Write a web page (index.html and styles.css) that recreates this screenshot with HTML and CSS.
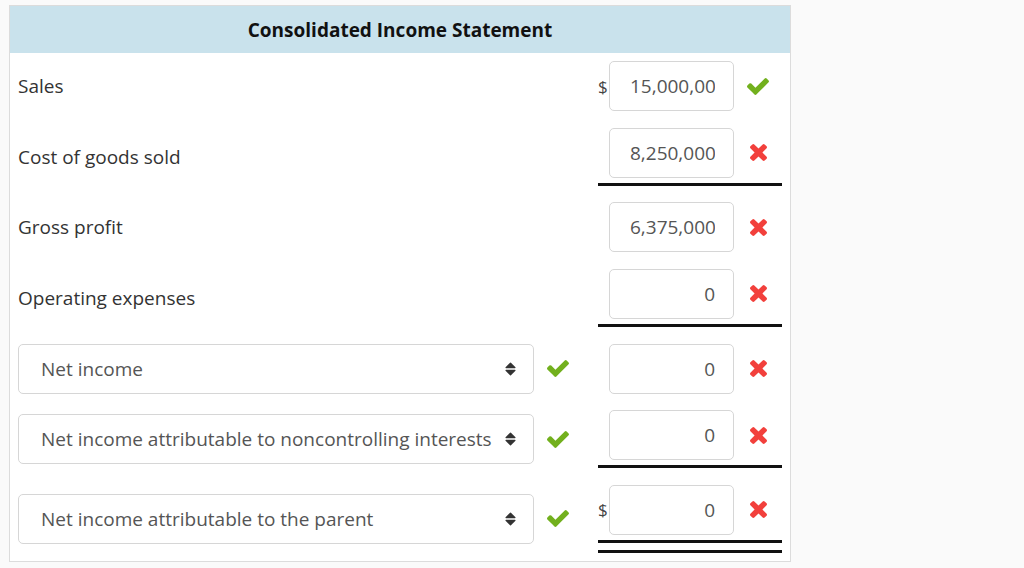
FILE: index.html
```html
<!DOCTYPE html>
<html lang="en">
<head>
<meta charset="utf-8">
<title>Consolidated Income Statement</title>
<link rel="stylesheet" href="styles.css">
</head>
<body>
<svg width="0" height="0" class="defs" aria-hidden="true">
  <defs>
    <symbol id="ok" viewBox="121 334 1550 1190"><path d="M1671 566q0 40-28 68l-724 724-136 136q-28 28-68 28t-68-28l-136-136-362-362q-28-28-28-68t28-68l136-136q28-28 68-28t68 28l294 295 656-657q28-28 68-28t68 28l136 136q28 28 28 68z"/></symbol>
    <symbol id="bad" viewBox="110 366 1188 1188"><path d="M1298 1322q0 40-28 68l-136 136q-28 28-68 28t-68-28l-294-294-294 294q-28 28-68 28t-68-28l-136-136q-28-28-28-68t28-68l294-294-294-294q-28-28-28-68t28-68l136-136q28-28 68-28t68 28l294 294 294-294q28-28 68-28t68 28l136 136q28 28 28 68t-28 68l-294 294 294 294q28 28 28 68z"/></symbol>
    <symbol id="sort" viewBox="0 0 11 14"><path d="M1 6.2h9a.6.6 0 0 0 .45-1L5.950.7a.6.6 0 0 0-.9 0L.55 5.2A.6.6 0 0 0 1 6.2zM1 7.8h9a.6.6 0 0 1 .45 1l-4.5 4.5a.6.6 0 0 1-.9 0L.55 8.8A.6.6 0 0 1 1 7.8z"/></symbol>
  </defs>
</svg>
<div class="statement">
  <div class="head">Consolidated Income Statement</div>
  <div class="rows">
    <div class="row">
      <div class="label">Sales</div>
      <div class="mark"></div>
      <div class="amt">
        <div class="line"><span class="cur">$</span><div class="box"><span class="val">15,000,000</span></div><span class="status"><svg class="ok"><use href="#ok"/></svg></span></div>
      </div>
    </div>
    <div class="row">
      <div class="label">Cost of goods sold</div>
      <div class="mark"></div>
      <div class="amt">
        <div class="line"><span class="cur"></span><div class="box"><span class="val">8,250,000</span></div><span class="status"><svg class="bad"><use href="#bad"/></svg></span></div>
        <div class="rule"></div>
      </div>
    </div>
    <div class="row">
      <div class="label">Gross profit</div>
      <div class="mark"></div>
      <div class="amt">
        <div class="line"><span class="cur"></span><div class="box"><span class="val">6,375,000</span></div><span class="status"><svg class="bad"><use href="#bad"/></svg></span></div>
      </div>
    </div>
    <div class="row">
      <div class="label">Operating expenses</div>
      <div class="mark"></div>
      <div class="amt">
        <div class="line"><span class="cur"></span><div class="box"><span class="val">0</span></div><span class="status"><svg class="bad"><use href="#bad"/></svg></span></div>
        <div class="rule"></div>
      </div>
    </div>
    <div class="row">
      <div class="select"><span>Net income</span><svg class="sort"><use href="#sort"/></svg></div>
      <div class="mark"><svg class="ok"><use href="#ok"/></svg></div>
      <div class="amt">
        <div class="line"><span class="cur"></span><div class="box"><span class="val">0</span></div><span class="status"><svg class="bad"><use href="#bad"/></svg></span></div>
      </div>
    </div>
    <div class="row">
      <div class="select"><span>Net income attributable to noncontrolling interests</span><svg class="sort"><use href="#sort"/></svg></div>
      <div class="mark"><svg class="ok"><use href="#ok"/></svg></div>
      <div class="amt">
        <div class="line"><span class="cur"></span><div class="box"><span class="val">0</span></div><span class="status"><svg class="bad"><use href="#bad"/></svg></span></div>
        <div class="rule"></div>
      </div>
    </div>
    <div class="row">
      <div class="select"><span>Net income attributable to the parent</span><svg class="sort"><use href="#sort"/></svg></div>
      <div class="mark"><svg class="ok"><use href="#ok"/></svg></div>
      <div class="amt">
        <div class="line"><span class="cur">$</span><div class="box"><span class="val">0</span></div><span class="status"><svg class="bad"><use href="#bad"/></svg></span></div>
        <div class="rule double"></div>
      </div>
    </div>
  </div>
</div>
</body>
</html>
```
FILE: styles.css
```css
html, body {
  margin: 0;
  padding: 0;
}
body {
  background: #fafafa;
  padding: 5px 0 0 9px;
  font-family: "Open Sans", "Liberation Sans", sans-serif;
  font-size: 19px;
  color: #333;
  height: 568px;
  box-sizing: border-box;
  overflow: hidden;
}
.defs {
  position: absolute;
  width: 0;
  height: 0;
}
.statement {
  width: 782px;
  box-sizing: border-box;
  border: 1px solid #dcdcdc;
  background: #fff;
}
.head {
  height: 47px;
  background: #c9e2ec;
  display: flex;
  align-items: center;
  justify-content: center;
  font-weight: 700;
  color: #111;
}
.rows {
  padding: 8px 8px 8px 8px;
  display: flex;
  flex-direction: column;
  gap: 16.67px;
}
.row {
  display: grid;
  grid-template-columns: 516px 64px 184px;
  align-items: center;
}
.label {
  color: #333;
  white-space: nowrap;
}
.mark {
  display: flex;
  align-items: center;
  padding-left: 13px;
}
.select {
  height: 50px;
  box-sizing: border-box;
  border: 1px solid #d6d6d6;
  border-radius: 5px;
  padding: 0 17px 0 22px;
  display: flex;
  align-items: center;
  justify-content: space-between;
  color: #555;
  white-space: nowrap;
}
.sort {
  width: 11px;
  height: 14px;
  fill: #333;
  flex: none;
}
.line {
  display: grid;
  grid-template-columns: 11px 125px 48px;
  align-items: center;
}
.cur {
  color: #444;
  font-size: 17px;
}
.box {
  height: 50px;
  box-sizing: border-box;
  border: 1px solid #d6d6d6;
  border-radius: 5px;
  padding: 0 18px 0 20px;
  line-height: 48px;
  text-align: right;
  white-space: nowrap;
  color: #555;
}
.val {
  display: block;
  overflow: hidden;
}
.status {
  display: flex;
  justify-content: center;
  align-items: center;
}
.ok {
  width: 22px;
  height: 17px;
  fill: #72b01d;
}
.bad {
  width: 17px;
  height: 17px;
  fill: #f2403c;
}
.rule {
  margin-top: 5px;
  height: 3px;
  background: #111;
}
.rule.double {
  height: 7px;
  background: none;
  border-top: 3px solid #111;
  border-bottom: 3px solid #111;
}
```
